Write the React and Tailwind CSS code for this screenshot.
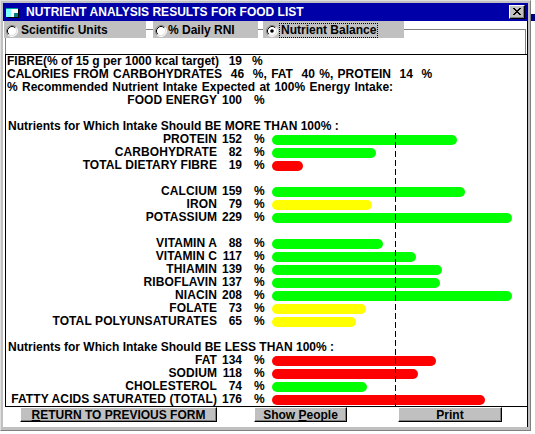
import React from 'react';

const G = 'bg-[#00ff00]';
const Y = 'bg-[#ffff00]';
const R = 'bg-[#ff0000]';

const more1 = [['PROTEIN', 152, G], ['CARBOHYDRATE', 82, G], ['TOTAL DIETARY FIBRE', 19, R]];
const more2 = [['CALCIUM', 159, G], ['IRON', 79, Y], ['POTASSIUM', 229, G]];
const more3 = [
  ['VITAMIN A', 88, G],
  ['VITAMIN C', 117, G],
  ['THIAMIN', 139, G],
  ['RIBOFLAVIN', 137, G],
  ['NIACIN', 208, G],
  ['FOLATE', 73, Y],
  ['TOTAL POLYUNSATURATES', 65, Y],
];
const less = [['FAT', 134, R], ['SODIUM', 118, R], ['CHOLESTEROL', 74, G], ['FATTY ACIDS SATURATED (TOTAL)', 176, R]];

function Radio({ checked }) {
  return (
    <svg width="12" height="12" viewBox="0 0 12 12" className="shrink-0">
      <circle cx="6" cy="6" r="5" fill="#fff" />
      <path d="M2.11 9.89 A5.5 5.5 0 0 1 9.89 2.11" fill="none" stroke="#808080" strokeWidth="1" />
      <path d="M9.89 2.11 A5.5 5.5 0 0 1 2.11 9.89" fill="none" stroke="#ffffff" strokeWidth="1" />
      <path d="M2.82 9.18 A4.5 4.5 0 0 1 9.18 2.82" fill="none" stroke="#000" strokeWidth="1" />
      <path d="M9.18 2.82 A4.5 4.5 0 0 1 2.82 9.18" fill="none" stroke="#dfdfdf" strokeWidth="1" />
      {checked && <circle cx="6" cy="6" r="1.8" fill="#000" />}
    </svg>
  );
}

function TitleIcon() {
  return (
    <svg width="16" height="14" viewBox="0 0 16 14" className="shrink-0" shapeRendering="crispEdges">
      <rect x="1" y="3" width="12" height="9" fill="#ffffff" />
      <rect x="1" y="3" width="5" height="9" fill="#80ffff" />
      <rect x="1" y="3" width="12" height="1" fill="#00a0a0" />
      <rect x="9" y="8" width="4" height="4" fill="#008080" />
      <rect x="13" y="4" width="1" height="8" fill="#000000" />
      <rect x="2" y="12" width="12" height="1" fill="#000000" />
    </svg>
  );
}

function CloseBtn() {
  return (
    <div className="ml-auto mr-[3px] w-[16px] h-[14px] shrink-0 bg-[#c0c0c0] border border-t-white border-l-white border-r-black border-b-black shadow-[inset_-1px_-1px_0_#808080] flex items-center justify-center pr-[1px] pb-[1px]">
      <svg width="8" height="7" viewBox="0 0 8 7" shapeRendering="crispEdges">
        <path
          d="M0 0h2v1h-2z M6 0h2v1h-2z M1 1h2v1h-2z M5 1h2v1h-2z M2 2h4v1h-4z M3 3h2v1h-2z M2 4h4v1h-4z M1 5h2v1h-2z M5 5h2v1h-2z M0 6h2v1h-2z M6 6h2v1h-2z"
          fill="#000"
        />
      </svg>
    </div>
  );
}

function Bar({ pct, color }) {
  const w = Math.min(9 + 1.158 * pct, 240);
  return <div className={`h-[10px] rounded-full ${color}`} style={{ width: w }} />;
}

function NRow({ label, val, color }) {
  return (
    <div className="flex h-[13px] items-center">
      <div className="w-[211px] shrink-0 text-right whitespace-nowrap tracking-[0.1px]">{label}</div>
      <div className="w-[25px] shrink-0 text-right">{val}</div>
      <div className="w-[30px] shrink-0 pl-[12px]">%</div>
      {color && <Bar pct={val} color={color} />}
    </div>
  );
}

function Blank() {
  return <div className="h-[13px]" />;
}

function Btn({ w, children }) {
  return (
    <div
      className={`${w} h-[15px] shrink-0 bg-[#c0c0c0] border border-t-white border-l-white border-r-black border-b-black shadow-[inset_-1px_-1px_0_#808080] flex items-center justify-center leading-[12px]`}
    >
      {children}
    </div>
  );
}

export default function App() {
  return (
    <div className="w-[535px] h-[434px] bg-white flex items-start font-['Liberation_Sans',Arial,Helvetica,sans-serif] font-bold text-[12px] leading-[13px] text-black">
      <div className="w-[531px] h-[431px] shrink-0 bg-[#c0c0c0] border border-t-[#dfdfdf] border-l-[#dfdfdf] border-r-[#808080] border-b-[#808080] pt-[2px] px-[2px] pb-[3px] flex flex-col">
        {/* title bar */}
        <div className="h-[18px] shrink-0 bg-[#0000a8] flex items-center pl-[2px]">
          <TitleIcon />
          <span className="ml-[5px] text-white whitespace-nowrap">NUTRIENT ANALYSIS RESULTS FOR FOOD LIST</span>
          <CloseBtn />
        </div>

        {/* client */}
        <div className="flex-1 bg-white border-r border-black flex flex-col">
          {/* radio group */}
          <div className="h-[33px] shrink-0 relative">
            <div className="absolute top-[8px] left-[2px] right-[1px] bottom-0 border-t border-l border-r border-[#808080]" />
            <div className="relative flex items-start pl-[1px]">
              <div className="w-[142px] h-[17px] bg-[#c0c0c0] flex items-center pt-[2px] pl-[2px] gap-[3px]">
                <Radio />
                <span className="whitespace-nowrap">Scientific Units</span>
              </div>
              <div className="ml-[7px] w-[105px] h-[17px] bg-[#c0c0c0] flex items-center pt-[2px] pl-[2px] gap-[1px]">
                <Radio />
                <span className="whitespace-nowrap">% Daily RNI</span>
              </div>
              <div className="ml-[5px] w-[141px] h-[17px] bg-[#c0c0c0] flex items-center pt-[2px] pl-[3px]">
                <Radio checked />
                <span className="ml-[1px] whitespace-nowrap border border-dotted border-black px-[1px]">Nutrient Balance</span>
              </div>
            </div>
          </div>

          {/* content */}
          <div className="h-[353px] shrink-0 ml-[2px] border-t border-l border-b border-black relative flex flex-col">
            <div className="flex h-[13px] items-center">
              <div className="w-[211px] shrink-0 pl-[1px] whitespace-nowrap">FIBRE(% of 15 g per 1000 kcal target)</div>
              <div className="w-[25px] shrink-0 text-right">19</div>
              <div className="w-[30px] shrink-0 pl-[10px]">%</div>
            </div>
            <div className="h-[13px] pl-[1px] whitespace-pre [word-spacing:1px]">CALORIES FROM CARBOHYDRATES  46  %, FAT  40 %, PROTEIN  14  %</div>
            <div className="h-[13px] pl-[1px] whitespace-pre [word-spacing:1px]">% Recommended Nutrient Intake Expected at 100% Energy Intake:</div>
            <NRow label="FOOD ENERGY" val={100} />
            <Blank />
            <div className="h-[13px] pl-[2px] whitespace-pre">Nutrients for Which Intake Should BE MORE THAN 100% :</div>
            {more1.map(([l, v, c]) => (
              <NRow key={l} label={l} val={v} color={c} />
            ))}
            <Blank />
            {more2.map(([l, v, c]) => (
              <NRow key={l} label={l} val={v} color={c} />
            ))}
            <Blank />
            {more3.map(([l, v, c]) => (
              <NRow key={l} label={l} val={v} color={c} />
            ))}
            <Blank />
            <div className="h-[13px] pl-[2px] whitespace-pre">Nutrients for Which Intake Should BE LESS THAN 100% :</div>
            {less.map(([l, v, c]) => (
              <NRow key={l} label={l} val={v} color={c} />
            ))}

            <svg className="absolute left-[389px] top-[78px]" width="1" height="273" viewBox="0 0 1 273" shapeRendering="crispEdges">
              <line x1="0.5" y1="0" x2="0.5" y2="273" stroke="#000" strokeWidth="1" strokeDasharray="6 3" />
            </svg>
          </div>

          {/* buttons */}
          <div className="h-[15px] shrink-0 flex pl-[17px]">
            <Btn w="w-[197px]">
              <span>
                <span className="underline">R</span>ETURN TO PREVIOUS FORM
              </span>
            </Btn>
            <div className="w-[37px] shrink-0" />
            <Btn w="w-[93px]">
              <span>
                Show <span className="underline">P</span>eople
              </span>
            </Btn>
            <div className="w-[51px] shrink-0" />
            <Btn w="w-[104px]">
              <span>Print</span>
            </Btn>
          </div>
        </div>
      </div>
      <div className="mt-[14px] w-[4px] h-[7px] shrink-0 bg-[#000080]" />
    </div>
  );
}
